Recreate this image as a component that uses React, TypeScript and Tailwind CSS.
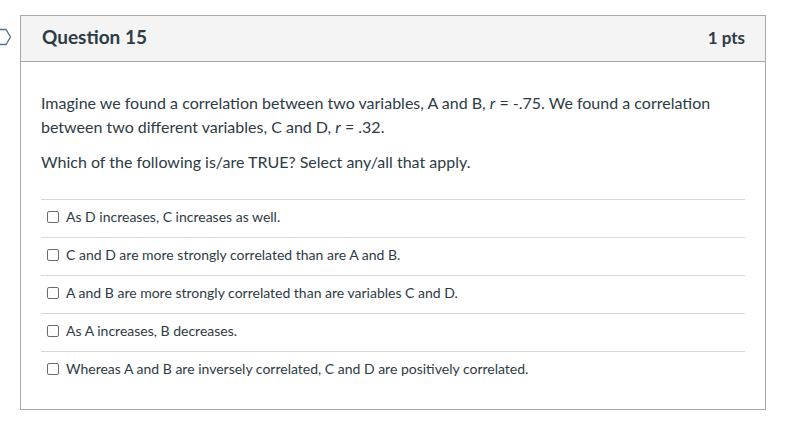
import React from "react";

const answers = [
  "As D increases, C increases as well.",
  "C and D are more strongly correlated than are A and B.",
  "A and B are more strongly correlated than are variables C and D.",
  "As A increases, B decreases.",
  "Whereas A and B are inversely correlated, C and D are positively correlated.",
];

export default function App() {
  return (
    <div className="w-[797px] h-[429px] bg-white relative overflow-hidden text-[#2d3b45]" style={{ fontFamily: "Lato, 'Liberation Sans', sans-serif" }}>
      <svg className="absolute left-0 top-[28px]" width="12" height="18" viewBox="0 0 12 18">
        <path d="M-4 1.5 H6 L10.5 9 L6 16.5 H-4" fill="none" stroke="#50728f" strokeWidth="1.3" />
      </svg>
      <div className="ml-[20px] mt-[15px] w-[746px] h-[395px] border border-[#a8a8a8] flex flex-col">
        <div className="h-[46px] bg-[#f4f4f4] border-b border-[#a8a8a8] flex items-center justify-between pl-[21px] pr-[20px]">
          <div className="text-[19px] font-bold leading-none pb-[5px]">Question 15</div>
          <div className="text-[17px] font-bold leading-none pb-[2px]">1 pts</div>
        </div>
        <div className="px-[20px] pt-[29px]">
          <p className="text-[16px] leading-[24px]">
            Imagine we found a correlation between two variables, A and B, <i>r</i> = -.75. We found a correlation between two different variables, C and D, <i>r</i> = .32.
          </p>
          <p className="text-[16px] leading-[24px] mt-[11px]">
            Which of the following is/are TRUE? Select any/all that apply.
          </p>
          <div className="mt-[25px]">
            {answers.map((a) => (
              <div key={a} className="border-t border-[#d9d9d9] pt-[8px] pb-[11px] flex items-center">
                <div className="ml-[6px] w-[12px] h-[12px] border border-[#6b6b6b] rounded-[2px] bg-white" />
                <div className="ml-[7px] text-[14px] leading-[18px]">{a}</div>
              </div>
            ))}
          </div>
        </div>
      </div>
    </div>
  );
}
